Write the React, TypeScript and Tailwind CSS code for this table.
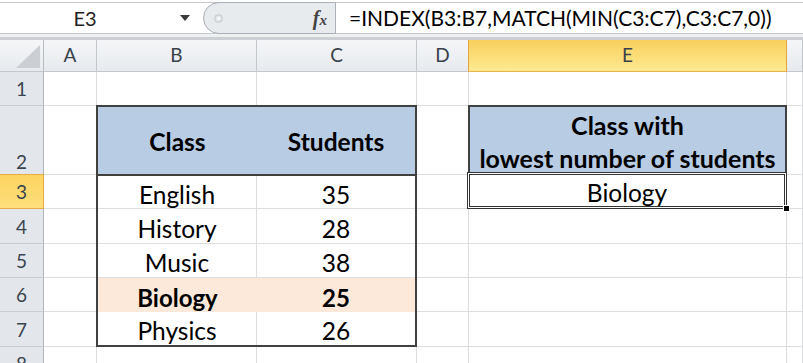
import React from "react";

const CS = ["col-start-1", "col-start-2", "col-start-3", "col-start-4", "col-start-5", "col-start-6", "col-start-7"];
const RS = ["row-start-1", "row-start-2", "row-start-3", "row-start-4", "row-start-5", "row-start-6", "row-start-7", "row-start-8", "row-start-9"];
const LETTERS = ["", "A", "B", "C", "D", "E", ""];

function Corner() {
  return (
    <div className={`${CS[0]} ${RS[0]} bg-linear-to-b from-[#f4f6f8] to-[#e7eaee] border-r border-b border-r-[#b7bcc2] border-b-[#c3c8ce] flex items-end justify-end pr-[3px] pb-[3px]`}>
      <svg width="24" height="23" viewBox="0 0 24 23">
        <polygon points="0,23 24,23 24,0" fill="#cbcfd4" />
      </svg>
    </div>
  );
}

function ColHeader({ c }: { c: number }) {
  const sel = c === 5;
  const cls = sel
    ? "bg-linear-to-b from-[#f8d05c] to-[#fee990] border-r border-b border-r-[#e2a640] border-b-[#eeb24d] border-l border-l-[#e2a640] -ml-px"
    : "bg-linear-to-b from-[#f4f6f8] to-[#e7eaee] border-r border-b border-r-[#c3c7cc] border-b-[#c3c8ce]";
  return (
    <div className={`${CS[c]} ${RS[0]} ${cls} flex items-center justify-center text-[19px] text-[#38414b]`}>
      {LETTERS[c]}
    </div>
  );
}

function RowHeader({ r }: { r: number }) {
  const sel = r === 3;
  const cls = sel
    ? "bg-linear-to-b from-[#fcd35f] to-[#fddf7c] border-r border-b border-t border-[#e6ad45] -mt-px"
    : "bg-[#e3e7ec] border-r border-b border-r-[#aeb5bd] border-b-[#c7ccd2]";
  const align = r === 8 ? "items-start pt-[3px] leading-[28px]" : r === 2 ? "items-end leading-[24px]" : "items-end pb-[2px] leading-[28px]";
  return (
    <div className={`${CS[0]} ${RS[r]} ${cls} flex ${align} justify-center text-[19px] text-[#3a444e]`}>
      {r}
    </div>
  );
}

function Cell({ r, c }: { r: number; c: number }) {
  return <div className={`${CS[c]} ${RS[r]} bg-white border-r border-b border-[#dcdedf]`} />;
}

function DataRow({ name, value, h, hl, last }: { name: string; value: string; h: string; hl?: boolean; last?: boolean }) {
  return (
    <div className={`flex ${h} ${hl ? "bg-[#fde9d9] font-bold text-[24px]" : "bg-white"} ${last || hl ? "" : "border-b border-[#dcdedf]"}`}>
      <div className={`w-[159px] flex items-center justify-center pt-[6px] ${hl ? "" : "border-r border-[#dcdedf]"}`}>{name}</div>
      <div className="flex-1 flex items-center justify-center pt-[6px]">{value}</div>
    </div>
  );
}

export default function App() {
  const cells: React.ReactNode[] = [];
  cells.push(<Corner key="corner" />);
  for (let c = 1; c <= 6; c++) cells.push(<ColHeader key={`h${c}`} c={c} />);
  for (let r = 1; r <= 8; r++) {
    cells.push(<RowHeader key={`r${r}`} r={r} />);
    for (let c = 1; c <= 6; c++) cells.push(<Cell key={`c${r}-${c}`} r={r} c={c} />);
  }

  return (
    <div className="w-[803px] h-[363px] overflow-hidden bg-white font-['Lato',sans-serif] text-black">
      {/* formula bar */}
      <div className="pt-[2px] bg-white">
        <div className="h-[32px] flex border-t border-b border-[#c5c9ce] bg-white">
          <div className="w-[203px] flex items-center">
            <span className="w-[170px] text-center text-[20px] text-[#222]">E3</span>
            <svg width="10" height="6" viewBox="0 0 10 6" className="ml-[10px]">
              <polygon points="0,0 10,0 5,6" fill="#3a3a3a" />
            </svg>
          </div>
          <div className="w-[133px] -my-px rounded-l-[16px] border border-[#aab0b7] bg-[#e8ebee] flex items-center">
            <div className="ml-[10px] w-[9px] h-[9px] rounded-full bg-radial from-[#ffffff] to-[#c4c8cc] border border-[#c9cdd1]" />
            <span className="ml-auto mr-[8px] font-['Liberation_Serif',serif] italic font-bold text-[20px] text-[#444] leading-none">
              f<span className="text-[15px]">x</span>
            </span>
          </div>
          <div className="flex-1 flex items-center pl-[13px] text-[21px] text-black whitespace-nowrap">
            =INDEX(B3:B7,MATCH(MIN(C3:C7),C3:C7,0))
          </div>
        </div>
      </div>
      <div className="h-[3px] bg-[#eef0f2]" />
      <div className="h-[3px] bg-[#ccd0d5]" />
      {/* grid */}
      <div className="grid grid-cols-[44px_53px_160px_160px_52px_318px_16px] grid-rows-[32px_34px_69px_34px_35px_34px_34px_35px_35px]">
        {cells}
        {/* table B2:C7 */}
        <div className="col-start-3 col-span-2 row-start-3 row-span-6 -ml-px -mt-px border-2 border-[#404040] flex flex-col text-[24.5px] relative z-10">
          <div className="h-[69px] bg-[#b8cce4] border-b-2 border-[#404040] flex font-bold text-[24.5px]">
            <div className="w-[159px] flex items-center justify-center pt-[4px]">Class</div>
            <div className="flex-1 flex items-center justify-center pt-[4px]">Students</div>
          </div>
          <DataRow name="English" value="35" h="h-[33px]" />
          <DataRow name="History" value="28" h="h-[35px]" />
          <DataRow name="Music" value="38" h="h-[34px]" />
          <DataRow name="Biology" value="25" h="h-[34px]" hl />
          <DataRow name="Physics" value="26" h="h-[33px]" last />
        </div>
        {/* E2 header */}
        <div className="col-start-6 row-start-3 -ml-px -mt-px border-2 border-[#404040] bg-[#b8cce4] flex flex-col items-center justify-center font-bold text-[25px] leading-[33px] pt-[4px] z-10 whitespace-nowrap">
          <div>Class with</div>
          <div>lowest number of students</div>
        </div>
        {/* E3 selected */}
        <div className="col-start-6 row-start-4 -ml-[2px] -mt-[3px] border-[3px] border-double border-[#333] bg-white flex items-center justify-center text-[24.5px] pt-[5px] relative z-20">
          Biology
          <div className="absolute -right-[6px] -bottom-[6px] w-[7px] h-[7px] bg-black border border-white" />
        </div>
      </div>
    </div>
  );
}
